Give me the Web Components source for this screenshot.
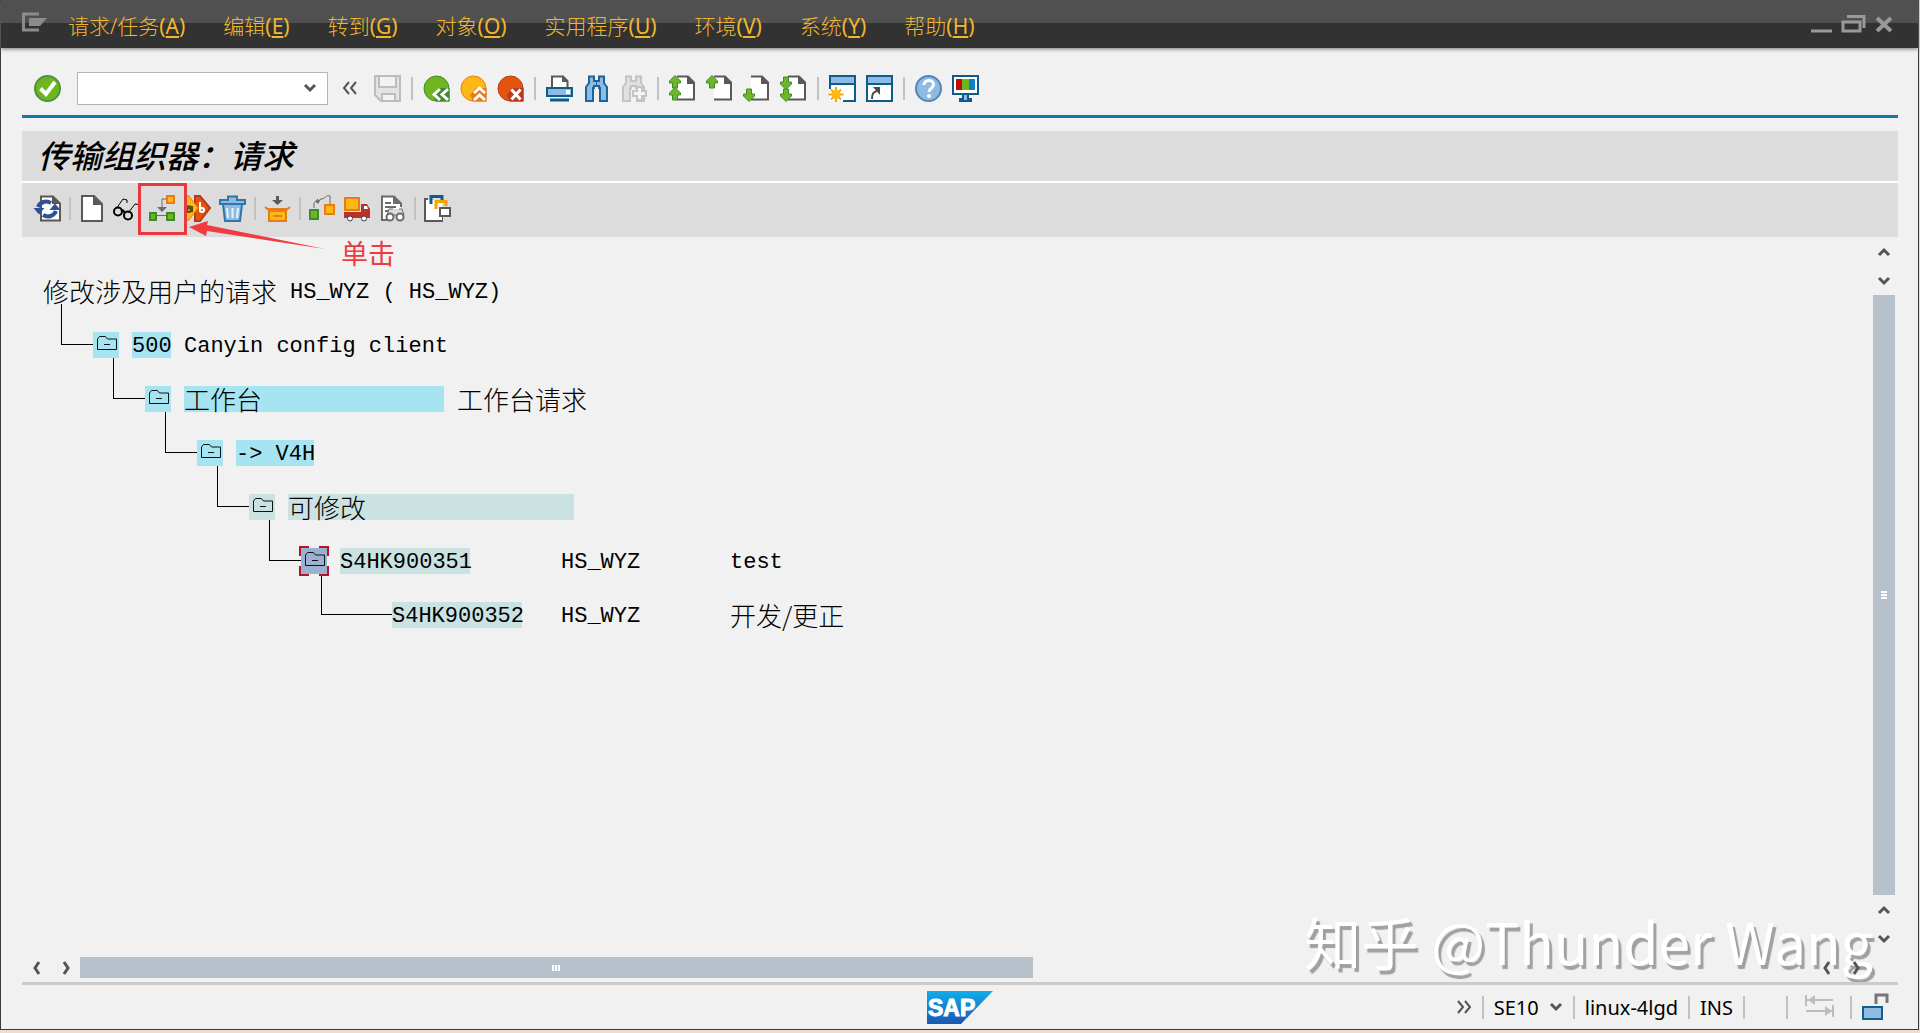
<!DOCTYPE html>
<html lang="zh-CN">
<head>
<meta charset="utf-8">
<title>传输组织器：请求</title>
<style>
  html, body {
    height: 100%;
    margin: 0;
  }

  body {
    background: #ecdcd2;
    font-family: "Noto Sans", "Noto Sans CJK SC", sans-serif;
    font-size: 20px;
    color: #000;
  }
</style>
</head>
<body>

<sap-window>
  <menu-bar slot="menu">
    <menu-item key="A">请求/任务</menu-item>
    <menu-item key="E">编辑</menu-item>
    <menu-item key="G">转到</menu-item>
    <menu-item key="O">对象</menu-item>
    <menu-item key="U">实用程序</menu-item>
    <menu-item key="V">环境</menu-item>
    <menu-item key="Y">系统</menu-item>
    <menu-item key="H">帮助</menu-item>
  </menu-bar>

  <system-bar slot="system">
    <tool-button icon="back" label="返回"></tool-button>
    <tool-button icon="exit" label="退出"></tool-button>
    <tool-button icon="cancel" label="取消"></tool-button>
    <tool-separator></tool-separator>
    <tool-button icon="print" label="打印"></tool-button>
    <tool-button icon="find" label="查找"></tool-button>
    <tool-button icon="findNext" label="继续查找"></tool-button>
    <tool-separator></tool-separator>
    <tool-button icon="firstPage" label="第一页"></tool-button>
    <tool-button icon="prevPage" label="上一页"></tool-button>
    <tool-button icon="nextPage" label="下一页"></tool-button>
    <tool-button icon="lastPage" label="最后一页"></tool-button>
    <tool-separator></tool-separator>
    <tool-button icon="newSession" label="创建新会话"></tool-button>
    <tool-button icon="shortcut" label="生成快捷方式"></tool-button>
    <tool-separator></tool-separator>
    <tool-button icon="help" label="帮助"></tool-button>
    <tool-button icon="layout" label="定制本地布局"></tool-button>
  </system-bar>

  <title-bar slot="title">传输组织器：请求</title-bar>

  <app-toolbar slot="toolbar">
    <tool-button icon="refresh" label="刷新"></tool-button>
    <tool-separator></tool-separator>
    <tool-button icon="create" label="创建"></tool-button>
    <tool-button icon="display" label="显示"></tool-button>
    <tool-button icon="hierarchy" label="添加任务"></tool-button>
    <tool-button icon="rename" label="重命名"></tool-button>
    <tool-button icon="trash" label="删除"></tool-button>
    <tool-separator></tool-separator>
    <tool-button icon="pack" label="包括对象"></tool-button>
    <tool-separator></tool-separator>
    <tool-button icon="merge" label="合并"></tool-button>
    <tool-button icon="truck" label="释放"></tool-button>
    <tool-button icon="logs" label="日志"></tool-button>
    <tool-separator></tool-separator>
    <tool-button icon="other" label="其它请求"></tool-button>
    <click-hint slot="hint">单击</click-hint>
  </app-toolbar>

  <request-tree>
    <tree-row root>
      <tree-cell wide cells="18">修改涉及用户的请求</tree-cell>
      <tree-cell>HS_WYZ ( HS_WYZ)</tree-cell>
    </tree-row>
    <tree-row level="0" folder tone="cyan">
      <tree-cell cells="3" tone="cyan">500</tree-cell>
      <tree-cell>Canyin config client</tree-cell>
    </tree-row>
    <tree-row level="1" folder tone="cyan">
      <tree-cell wide cells="20" tone="cyan">工作台</tree-cell>
      <tree-cell wide>工作台请求</tree-cell>
    </tree-row>
    <tree-row level="2" folder tone="cyan">
      <tree-cell cells="6" tone="cyan">-&gt; V4H</tree-cell>
    </tree-row>
    <tree-row level="3" folder tone="teal">
      <tree-cell wide cells="22" tone="teal">可修改</tree-cell>
    </tree-row>
    <tree-row level="4" folder selected>
      <tree-cell cells="10" space="6" tone="teal">S4HK900351</tree-cell>
      <tree-cell cells="6" space="6">HS_WYZ</tree-cell>
      <tree-cell>test</tree-cell>
    </tree-row>
    <tree-row level="5">
      <tree-cell cells="10" space="2" tone="teal">S4HK900352</tree-cell>
      <tree-cell cells="6" space="6">HS_WYZ</tree-cell>
      <tree-cell wide>开发/更正</tree-cell>
    </tree-row>
  </request-tree>

  <scroll-bar slot="vscroll" vertical></scroll-bar>
  <scroll-bar slot="hscroll"></scroll-bar>
  <status-bar slot="status"></status-bar>
  <water-mark slot="mark">知乎 @Thunder Wang</water-mark>
</sap-window>

<script>
const PAGE = '<path d="M8 1.5h11l6 6v17H8z" fill="#fff"/><path d="M8 1.5h11l6 6v17H8" fill="none" stroke="#595959" stroke-width="2"/><path d="M18 1v8h8z" fill="#595959"/>';
const up = (x, y) => `<path transform="translate(${x} ${y})" d="M6 .5l5.5 5.5v2H8.500v5h-5V8H.5V6z" fill="#6fb52c" stroke="#3f8a2c"/>`;
const down = (x, y) => `<path transform="translate(${x} ${y})" d="M6 13.500L.5 8V6h3V1h5v5h3v2z" fill="#6fb52c" stroke="#3f8a2c"/>`;
const ball = (fill, edge, mark) => `<path d="M26 26H13A12.500 12.500 0 1 1 26 13z" fill="${fill}" stroke="${edge}"/><path d="M10 20l6-7h10.500v13.500H13z" fill="${edge}"/><path d="${mark}" fill="none" stroke="#fff" stroke-width="3"/>`;
const BINOCULARS = 'M3 26V12l3-4V1.500h5V6h5V1.500h5V8l3 4v14h-7V13h-1v-2h-5v2h-1v13z';

// All toolbar icons share a 27x27 box
const ICONS = {
  ok: '<circle cx="13.500" cy="13.500" r="12.500" fill="#6eb51f" stroke="#4c9440" stroke-width="2"/><path d="M6.500 13.500l5.500 5.500 9-12" fill="none" stroke="#fff" stroke-width="4"/>',
  save: '<path d="M1 1h25v25H7l-6-6z" fill="#e3e3e3" stroke="#bdbdbd" stroke-width="2"/><path d="M5 1h17v11H5zM8 19h13v7H8z" fill="#f2f2f2" stroke="#bdbdbd" stroke-width="2"/>',
  back: ball('#6eb51f', '#3f8a2c', 'M17 14l-6 5.500 6 5.500M25 14l-6 5.500 6 5.500'),
  exit: ball('#fdb913', '#e87b1c', 'M14 18l5.500-5 5.500 5M14 25l5.500-5 5.500 5'),
  cancel: ball('#e2540f', '#bb3a1c', 'M14.500 14.500l9 10M23.500 14.500l-9 10'),
  print: '<path d="M6 12V1.500h11l4.500 4.500v6" fill="#fff" stroke="#595959" stroke-width="2"/><path d="M16 1v6h6z" fill="#595959"/><path d="M1 13h25v8H1z" fill="#8fbae3" stroke="#0d5c8a" stroke-width="2"/><path d="M20 15h4v4h-4z" fill="#fff"/><path d="M4 25h19" stroke="#0d5c8a" stroke-width="3"/>',
  find: `<path d="${BINOCULARS}" fill="#8fbae3" stroke="#1b659a" stroke-width="2"/><path d="M13.500 6v5" stroke="#1b659a"/>`,
  findNext: `<path d="${BINOCULARS}" fill="#e0e0e0" stroke="#c4c4c4" stroke-width="2"/><path d="M17 12h5v4h4v5h-4v4h-5v-4h-4v-5h4z" fill="#f4f4f4" stroke="#c4c4c4" stroke-width="2"/>`,
  firstPage: PAGE + up(0, 0) + up(0, 12),
  prevPage: PAGE + up(0, 0),
  nextPage: PAGE + down(0, 13),
  lastPage: PAGE + down(0, 1) + down(0, 13),
  newSession: '<path d="M1 1h25v25H1z" fill="#fff"/><path d="M1 14V1h25v25H14" fill="none" stroke="#0d5c8a" stroke-width="2"/><path d="M2 2h23v6H2z" fill="#8fbae3"/><path d="M1 9h25" stroke="#0d5c8a" stroke-width="2"/><path d="M7 12v15M-.5 19.500h15M2 14.500l10 10M12 14.500l-10 10" stroke="#f5a300" stroke-width="2"/><circle cx="7" cy="19.500" r="4.500" fill="#fdb913"/>',
  shortcut: '<path d="M1 1h25v25H1z" fill="#fff" stroke="#0d5c8a" stroke-width="2"/><path d="M2 2h23v6H2z" fill="#8fbae3"/><path d="M1 9h25" stroke="#0d5c8a" stroke-width="2"/><path d="M6 24c0-5 1-7 5-8" fill="none" stroke="#4a4a4a" stroke-width="2"/><path d="M7 12h7v8z" fill="#4a4a4a"/>',
  help: '<circle cx="13.500" cy="13.500" r="12.500" fill="#8fbae3" stroke="#5087b5" stroke-width="2"/><path d="M9 10c0-6 9.500-6 9.500-.5 0 4-4.500 3.500-4.500 7.500" fill="none" stroke="#fff" stroke-width="3"/><circle cx="14" cy="21" r="2" fill="#fff"/>',
  layout: '<path d="M1 1h25v18H1z" fill="#fff" stroke="#0d5c8a" stroke-width="2"/><path d="M4 4h6v11H4z" fill="#c20a0a"/><path d="M10 4h7v11h-7z" fill="#6eb51f"/><path d="M17 4h6v11h-6z" fill="#0e7fc5"/><path d="M11 19h5v5h3v2H8v-2h3z" fill="#8fbae3" stroke="#0d5c8a" stroke-width="2"/>',
  refresh: '<path d="M7 1.500h12l7 7v17H7z" fill="#fff" stroke="#595959" stroke-width="2"/><path d="M18 1v8h8z" fill="#595959"/><path d="M4 12c2-5 8-7 13-4M22 16c-2 5-8 7-13 4" fill="none" stroke="#2d5199" stroke-width="4"/><path d="M-.5 13h11L5 19.500zM15.500 15h11L21 8.500z" fill="#2d5199"/>',
  create: '<path d="M3 1h12l8 8v17H3z" fill="#fff" stroke="#595959" stroke-width="2"/><path d="M14 1v9h9z" fill="#595959"/>',
  display: '<path d="M2 14L9 4l4 1v3M14 18l7-9 4 .5" fill="none" stroke="#000"/><circle cx="4" cy="16.500" r="4" fill="none" stroke="#000" stroke-width="2"/><circle cx="14" cy="20.500" r="4" fill="none" stroke="#000" stroke-width="2"/><path d="M7 16c2-2 3 0 3.500 2" fill="none" stroke="#000" stroke-width="2"/>',
  hierarchy: '<path d="M17 4h-4v11M8 20.500h10" fill="none" stroke="#6b6b6b"/><path d="M8 12h10l-5 5z" fill="#6b6b6b"/><path d="M18 1h7v7h-7z" fill="#fdb913" stroke="#e87b1c" stroke-width="2"/><path d="M1 18h6v7H1zM18 18h7v7h-7z" fill="#6eb51f" stroke="#3f8a2c" stroke-width="2"/>',
  rename: '<path d="M11 1h5l10 12-10 13h-5z" fill="#e2540f" stroke="#bb3a1c" stroke-width="2"/><path d="M1 1h4l9 12-9 12H1z" fill="#fdb913" stroke="#e87b1c"/><circle cx="5" cy="15" r="2" fill="none" stroke="#594a10" stroke-width="2"/><path d="M8 11v6M3 11.500h4" stroke="#594a10" stroke-width="2"/><path d="M16 7v10" stroke="#fff" stroke-width="2"/><circle cx="18" cy="15" r="2" fill="none" stroke="#fff" stroke-width="2"/>',
  trash: '<path d="M4 9h19l-2 17H6z" fill="#8fbae3" stroke="#2e77a8" stroke-width="2"/><path d="M8 13l1 10M13.500 13v10M19 13l-1 10" stroke="#e8f2fb" stroke-width="2"/><path d="M1 5h8V1.500h9V5h8v4H1z" fill="#8fbae3" stroke="#2e77a8" stroke-width="2"/>',
  pack: '<path d="M5 14h17v12H5z" fill="#fdb913" stroke="#e87b1c" stroke-width="2"/><path d="M1 12l5 4h15l5-4M9 21h9" fill="none" stroke="#e87b1c" stroke-width="2"/><path d="M13.500 1v5" stroke="#595959" stroke-width="3"/><path d="M8 5h11l-5.500 5z" fill="#595959"/>',
  merge: '<path d="M5 13V8l4-4M11 4c5 1 6-5 10-3v8" fill="none" stroke="#6b6b6b"/><path d="M6 6l6-2-3 5z" fill="#6b6b6b"/><path d="M1 15h8v9H1z" fill="#6eb51f" stroke="#3f8a2c" stroke-width="2"/><path d="M16 10h9v9h-9z" fill="#fdb913" stroke="#e87b1c" stroke-width="2"/>',
  truck: '<path d="M1 3h14v12H1z" fill="#fdb913" stroke="#e87b1c" stroke-width="2"/><path d="M0 17h17V9h6l3 5v9H0z" fill="#b8322a"/><path d="M20 11h3l1 3h-4z" fill="#fff"/><circle cx="6" cy="23.500" r="2.500" fill="#fff" stroke="#444"/><circle cx="20" cy="23.500" r="2.500" fill="#fff" stroke="#444"/>',
  logs: '<path d="M3 25V1.500h12l7 7V14H9v11z" fill="#fff"/><path d="M9 25H3V1.500h12l7 7V12M6 8h6M6 12h11M6 16h3" fill="none" stroke="#6b6b6b" stroke-width="2"/><path d="M14 1v8h8z" fill="#6b6b6b"/><path d="M8 20l2-6h4M25 20l-2-6h-3M13 20h4" fill="none" stroke="#6b6b6b"/><circle cx="11" cy="22" r="3.500" fill="#fff" stroke="#6b6b6b" stroke-width="2"/><circle cx="21" cy="22" r="3.500" fill="#fff" stroke="#6b6b6b" stroke-width="2"/>',
  other: '<path d="M4 4H1v22h17v-5" fill="#fff" stroke="#595959" stroke-width="2"/><path d="M2 5h16v20H2z" fill="#fff"/><path d="M7 9V1.500h11V5" fill="none" stroke="#0d5c8a" stroke-width="3"/><path d="M12 14V6.500h10V11" fill="none" stroke="#f5a300" stroke-width="3"/><path d="M16 13h10v8H16z" fill="#fff" stroke="#595959" stroke-width="2"/>'
};

// Chevron glyphs of the scroll bars and drop-downs, 14x14
const CHEVRONS = {
  up: 'M2 10l5-5 5 5',
  down: 'M2 4l5 5 5-5',
  left: 'M9 1L5 7l4 6',
  right: 'M5 1l4 6-4 6'
};
const chevron = dir => `<svg width="14" height="14" viewBox="0 0 14 14" aria-hidden="true"><path d="${CHEVRONS[dir]}" fill="none" stroke="#555" stroke-width="3"/></svg>`;
const icon = name => `<svg width="27" height="27" viewBox="0 0 27 27" aria-hidden="true">${ICONS[name]}</svg>`;

const RESET = `
  * { box-sizing: border-box; }
  svg { display: block; flex: none; overflow: visible; }
  button { display: block; margin: 0; padding: 0; border: 0; background: none; font: inherit; color: inherit; }
`;

class BaseElement extends HTMLElement {
  constructor() {
    super();
    this.attachShadow({mode: 'open'});
  }

  connectedCallback() {
    this.shadowRoot.innerHTML = `<style>${RESET}</style>${this.render()}`;
  }
}

class SapWindow extends BaseElement {
  render() {
    return `
      <style>
        :host {
          position: relative;
          display: flex;
          flex-direction: column;
          min-height: calc(100vh - 3px);
          box-sizing: border-box;
          margin-right: 1px;
          border: solid #3a3a3a;
          border-width: 0 1px 1px;
          background: #f1f1f1;
        }

        /* positioned, so that the scroll arrows stay above the water mark */
        #frame {
          position: relative;
          flex: 1;
          display: flex;
          flex-direction: column;
          padding: 0 20px 0 21px;
        }

        #work {
          flex: 1;
          display: flex;
        }

        main {
          flex: 1;
        }
      </style>
      <slot name="menu"></slot>
      <slot name="mark"></slot>
      <div id="frame">
        <slot name="system"></slot>
        <slot name="title"></slot>
        <slot name="toolbar"></slot>
        <div id="work">
          <main><slot></slot></main>
          <slot name="vscroll"></slot>
        </div>
        <slot name="hscroll"></slot>
        <slot name="status"></slot>
      </div>
    `;
  }
}

class MenuBar extends BaseElement {
  render() {
    return `
      <style>
        :host {
          display: flex;
          align-items: center;
          height: 48px;
          padding: 0 25px 0 21px;
          background: linear-gradient(#505050 23px, #323232 23px);
          box-shadow: 0 1px 4px #777;
        }

        nav {
          flex: 1;
          display: flex;
          gap: 38px;
          margin-left: 22px;
          padding-top: 4px;
        }

        #controls {
          display: flex;
          align-items: center;
          gap: 8px;
        }
      </style>
      <button aria-label="窗口菜单"><svg width="24" height="20" viewBox="0 0 24 20"><path d="M17 0H1.500v16H17" fill="none" stroke="#8c8c8c" stroke-width="3"/><path d="M7 4h18l-7 8H7z" fill="#8c8c8c"/></svg></button>
      <nav><slot></slot></nav>
      <div id="controls">
        <button aria-label="最小化"><svg width="22" height="20"><path d="M0 17h21" stroke="#999" stroke-width="3"/></svg></button>
        <button aria-label="还原"><svg width="26" height="20"><path d="M2 8h17v9H2zM6 2.500h17V14" fill="none" stroke="#999" stroke-width="3"/></svg></button>
        <button aria-label="关闭"><svg width="18" height="20"><path d="M2 4l14 13M16 4L2 17" stroke="#999" stroke-width="4"/></svg></button>
      </div>
    `;
  }
}

class MenuItem extends BaseElement {
  render() {
    return `
      <style>
        :host {
          display: block;
          color: #f0b72c;
          font-size: 21px;
          font-weight: 300;
          line-height: 28px;
          white-space: nowrap;
        }

        span {
          font-weight: 400;
        }
      </style>
      <button><slot></slot><span>(<u>${this.getAttribute('key')}</u>)</span></button>
    `;
  }
}

class ToolButton extends BaseElement {
  render() {
    return `
      <style>:host { display: block; }</style>
      <button aria-label="${this.getAttribute('label')}">${icon(this.getAttribute('icon'))}</button>
    `;
  }
}

class ToolSeparator extends BaseElement {
  render() {
    return `
      <style>
        :host {
          display: block;
          width: 2px;
          height: 23px;
          background: #c2c2c2;
        }
      </style>
    `;
  }
}

class SystemBar extends BaseElement {
  render() {
    return `
      <style>
        :host {
          display: flex;
          align-items: center;
          gap: 10px;
          height: 70px;
          padding: 13px 12px 0;
          border-bottom: 3px solid #1278a8;
          box-sizing: border-box;
        }

        #command {
          display: flex;
          align-items: center;
          width: 251px;
          height: 33px;
          margin: 0 4px 0 6px;
          padding-right: 10px;
          border: 1px solid #b5b5b5;
          background: #fff;
        }

        input {
          flex: 1;
          min-width: 0;
          height: 100%;
          border: 0;
          outline: 0;
          background: none;
          font: inherit;
        }

        #collapse {
          margin-right: 7px;
        }
      </style>
      <tool-button icon="ok" label="回车"></tool-button>
      <div id="command">
        <input type="text" aria-label="命令字段">
        <button aria-label="历史记录">${chevron('down')}</button>
      </div>
      <button id="collapse" aria-label="隐藏命令字段"><svg width="15" height="14"><path d="M7 1L2 7l5 6M14 1L9 7l5 6" fill="none" stroke="#555" stroke-width="2"/></svg></button>
      <tool-button icon="save" label="保存"></tool-button>
      <tool-separator></tool-separator>
      <slot></slot>
    `;
  }
}

class TitleBar extends BaseElement {
  render() {
    return `
      <style>
        :host {
          display: block;
          margin: 13px 0 2px;
          padding: 0 16px;
          background: #dcdcdc;
          box-shadow: 0 2px #fff;
        }

        h1 {
          margin: 0;
          font-size: 32px;
          font-weight: 500;
          font-style: italic;
          line-height: 50px;
        }
      </style>
      <h1><slot></slot></h1>
    `;
  }
}

class AppToolbar extends BaseElement {
  render() {
    return `
      <style>
        :host {
          position: relative;
          display: flex;
          align-items: center;
          gap: 8px;
          height: 54px;
          padding: 0 12px 3px;
          background: #dcdcdc;
          box-sizing: border-box;
        }
      </style>
      <slot></slot>
      <slot name="hint"></slot>
    `;
  }
}

// Red frame round the fourth tool, with an arrow and its caption
class ClickHint extends BaseElement {
  render() {
    return `
      <style>
        :host {
          position: absolute;
          left: 116px;
          top: 0;
          display: flex;
          align-items: flex-start;
          color: #ee3b3f;
          font-size: 27px;
          line-height: 36px;
          pointer-events: none;
        }

        #frame {
          width: 49px;
          height: 52px;
          border: 3px solid #e8393e;
        }

        svg {
          margin: 36px 15px 0 2px;
        }

        span {
          margin-top: 53px;
        }
      </style>
      <div id="frame"></div>
      <svg width="137" height="32" viewBox="0 0 137 32"><path d="M0 8l19-6-1 4 118 24L18 12l-1 5z" fill="#f03c40"/></svg>
      <span><slot></slot></span>
    `;
  }
}

class RequestTree extends BaseElement {
  render() {
    return `
      <style>
        :host {
          display: block;
          padding: 27px 0 27px 21px;
          font-family: "Liberation Mono", "Noto Sans CJK SC", monospace;
          font-size: 22px;
        }
      </style>
      <slot></slot>
    `;
  }
}

class TreeRow extends BaseElement {
  render() {
    const level = Number(this.getAttribute('level'));
    const isRoot = this.hasAttribute('root');
    const isFolder = this.hasAttribute('folder');
    return `
      <style>
        :host {
          --tone: #cae2e2;
          display: flex;
          align-items: center;
          gap: 13px;
          height: 54px;
          padding-left: ${isRoot ? 0 : 18 + level * 52}px;
          box-sizing: border-box;
        }

        :host([tone="cyan"]) { --tone: #a7e4f2; }
        :host([selected]) { --tone: #9cb0d2; }

        #node {
          align-self: flex-start;
          display: flex;
          align-items: flex-end;
          margin-top: -14px;
        }

        #line {
          width: ${isFolder ? 32 : 71}px;
          height: 41px;
          border: solid #000;
          border-width: 0 0 1px 1px;
          margin-right: ${isFolder ? 0 : -13}px;
        }

        #toggle {
          position: relative;
          width: 26px;
          height: 26px;
          margin-bottom: -13px;
          background: var(--tone);
        }

        #corners {
          position: absolute;
          left: -2px;
          top: -2px;
        }
      </style>
      ${isRoot ? '' : `
        <div id="node">
          <div id="line"></div>
          ${isFolder ? `
            <button id="toggle" aria-label="折叠">
              <svg width="26" height="26"><path d="M4.500 17.500V7l2-2.500h6l2 2.500h9v10.500zM11 12.500h6" fill="none" stroke="#111"/></svg>
              ${this.hasAttribute('selected') ? '<svg id="corners" width="30" height="30"><path d="M1 10V1h9M20 1h9v9M29 20v9h-9M10 29H1v-9" fill="none" stroke="#b5152b" stroke-width="2"/></svg>' : ''}
            </button>` : ''}
        </div>`}
      <slot></slot>
    `;
  }
}

class TreeCell extends BaseElement {
  render() {
    const cells = this.getAttribute('cells');
    const space = Number(this.getAttribute('space'));
    return `
      <style>
        :host {
          display: block;
          width: ${cells ? cells * 13 + 'px' : 'auto'};
          height: 26px;
          margin-right: ${space * 13}px;
          line-height: 30px;
          white-space: nowrap;
        }

        /* a Chinese character takes two 13px cells */
        :host([wide]) {
          font-family: "Noto Sans CJK SC", sans-serif;
          font-size: 26px;
          font-weight: 300;
          line-height: 26px;
        }

        :host([tone="cyan"]) { background: #a7e4f2; }
        :host([tone="teal"]) { background: #cae2e2; }
      </style>
      <slot></slot>
    `;
  }
}

class ScrollBar extends BaseElement {
  render() {
    const vertical = this.hasAttribute('vertical');
    const [prev, next] = vertical ? ['up', 'down'] : ['left', 'right'];
    const buttons = `<button aria-label="${prev}">${chevron(prev)}</button><button aria-label="${next}">${chevron(next)}</button>`;
    return `
      <style>
        :host {
          display: flex;
          align-items: center;
          height: 29px;
          padding-right: 28px;
          box-sizing: border-box;
        }

        :host([vertical]) {
          flex-direction: column;
          width: 22px;
          height: auto;
          margin-right: 3px;
          padding: 0;
        }

        button {
          display: grid;
          place-items: center;
          width: 29px;
          height: 29px;
        }

        #track {
          flex: 1;
          height: 21px;
        }

        :host([vertical]) #track {
          width: 22px;
        }

        #thumb {
          display: grid;
          place-items: center;
          width: 55%;
          height: 100%;
          background: #b7c1cc;
        }

        :host([vertical]) #thumb {
          width: 100%;
        }

        #grip {
          width: 8px;
          height: 6px;
          background: repeating-linear-gradient(90deg, #fff 0 2px, transparent 2px 3px);
        }

        :host([vertical]) #grip {
          width: 6px;
          height: 8px;
          background: repeating-linear-gradient(#fff 0 2px, transparent 2px 3px);
        }
      </style>
      ${buttons}
      <div id="track"><div id="thumb"><div id="grip"></div></div></div>
      ${buttons}
    `;
  }
}

class StatusBar extends BaseElement {
  render() {
    return `
      <style>
        :host {
          display: grid;
          grid-template-columns: 1fr auto 1fr;
          align-items: center;
          height: 47px;
          padding-right: 9px;
          border-top: 3px solid #cbcbcb;
          box-sizing: border-box;
        }

        #logo {
          grid-column: 2;
          margin-left: 8px;
        }

        #info {
          display: flex;
          justify-content: flex-end;
          align-items: center;
          gap: 10px;
          line-height: 27px;
        }

        select {
          appearance: none;
          padding: 0;
          border: 0;
          background: none;
          font: inherit;
          color: inherit;
        }

        #empty {
          width: 21px;
        }
      </style>
      <svg id="logo" width="66" height="33" viewBox="0 0 66 33" role="img" aria-label="SAP">
        <linearGradient id="blue" x2="0" y2="1"><stop stop-color="#10aeea"/><stop offset="1" stop-color="#1d55b5"/></linearGradient>
        <path d="M0 0h66L34 33H0z" fill="url(#blue)"/>
        <text x="1" y="25" fill="#fff" stroke="#fff" font-family="Liberation Sans, sans-serif" font-size="23" font-weight="bold">SAP</text>
      </svg>
      <div id="info">
        <button aria-label="展开"><svg width="15" height="14"><path d="M1 1l5 6-5 6M8 1l5 6-5 6" fill="none" stroke="#555" stroke-width="2"/></svg></button>
        <tool-separator></tool-separator>
        <select aria-label="事务"><option>SE10</option></select>
        ${chevron('down')}
        <tool-separator></tool-separator>
        <span>linux-4lgd</span>
        <tool-separator></tool-separator>
        <span>INS</span>
        <tool-separator></tool-separator>
        <span id="empty"></span>
        <tool-separator></tool-separator>
        <svg width="42" height="24"><path d="M8 0v11M8 5h27M8 16h27M35 10v12" fill="none" stroke="#bcbcbc" stroke-width="2"/><path d="M10 5l7-5v10zM34 16l-7-5v10z" fill="#bcbcbc"/></svg>
        <tool-separator></tool-separator>
        <svg width="27" height="26"><path d="M14 10V1h11v8" fill="none" stroke="#777" stroke-width="3"/><path d="M1 13h19v12H1z" fill="#8fbae3" stroke="#155e88" stroke-width="2"/></svg>
      </div>
    `;
  }
}

class WaterMark extends BaseElement {
  render() {
    return `
      <style>
        :host {
          position: absolute;
          right: 45px;
          bottom: 53px;
          color: #fff;
          font-family: "Noto Sans CJK SC", sans-serif;
          font-size: 57px;
          line-height: 72px;
          text-shadow: 3px 4px 1px #a0a0a0;
          white-space: nowrap;
          pointer-events: none;
        }
      </style>
      <slot></slot>
    `;
  }
}

customElements.define('sap-window', SapWindow);
customElements.define('menu-bar', MenuBar);
customElements.define('menu-item', MenuItem);
customElements.define('tool-button', ToolButton);
customElements.define('tool-separator', ToolSeparator);
customElements.define('system-bar', SystemBar);
customElements.define('title-bar', TitleBar);
customElements.define('app-toolbar', AppToolbar);
customElements.define('click-hint', ClickHint);
customElements.define('request-tree', RequestTree);
customElements.define('tree-row', TreeRow);
customElements.define('tree-cell', TreeCell);
customElements.define('scroll-bar', ScrollBar);
customElements.define('status-bar', StatusBar);
customElements.define('water-mark', WaterMark);
</script>
</body>
</html>
